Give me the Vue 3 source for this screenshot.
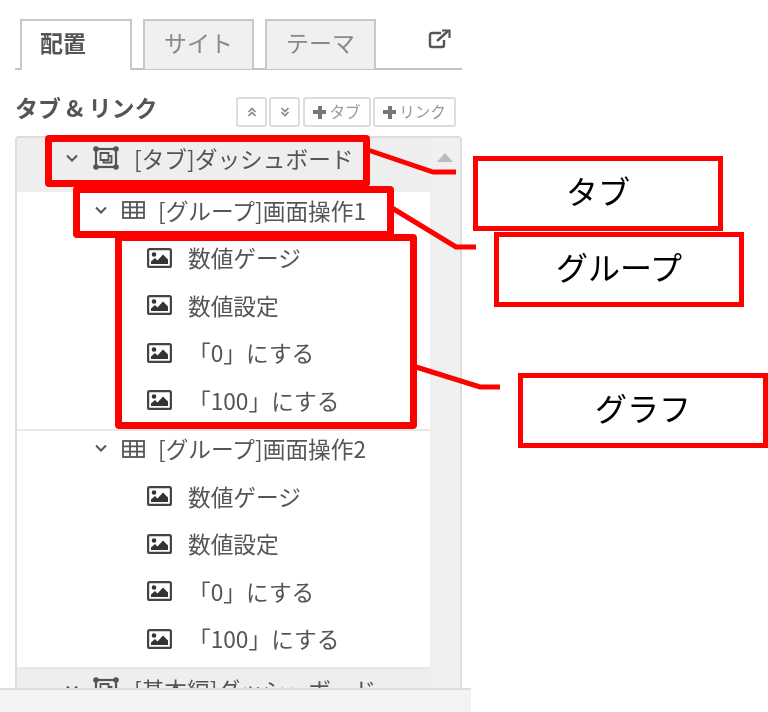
<script setup>
const sections = [
  { title: '[グループ]画面操作1', items: ['数値ゲージ', '数値設定', '「0」にする', '「100」にする'] },
  { title: '[グループ]画面操作2', items: ['数値ゲージ', '数値設定', '「0」にする', '「100」にする'] },
]
</script>

<template>
  <div class="page">
    <main class="panel">
      <nav class="tabs">
        <div class="tab active">配置</div>
        <div class="tab">サイト</div>
        <div class="tab">テーマ</div>
        <svg class="ext" viewBox="0 0 24 20" width="24" height="20" fill="none" stroke="#555" stroke-width="2.4">
          <path d="M13 4H4a2 2 0 0 0-2 2v10a2 2 0 0 0 2 2h10a2 2 0 0 0 2-2v-5" />
          <path d="M9 12 20 2" />
          <path d="M14 1.5h7.5V9" stroke-width="2.2" />
        </svg>
      </nav>
      <header class="head">
        <h2 class="title">タブ &amp; リンク</h2>
        <div class="btns">
          <button class="btn sq">
            <svg viewBox="0 0 10 10" width="10" height="10" fill="none" stroke="#888" stroke-width="1.6"><path d="M1.5 5 5 1.5 8.500 5M1.500 9 5 5.500 8.500 9" /></svg>
          </button>
          <button class="btn sq">
            <svg viewBox="0 0 10 10" width="10" height="10" fill="none" stroke="#888" stroke-width="1.6"><path d="M1.500 1 5 4.500 8.500 1M1.500 5 5 8.500 8.500 5" /></svg>
          </button>
          <button class="btn wide-a"><span class="plus"></span>タブ</button>
          <button class="btn wide-b"><span class="plus"></span>リンク</button>
        </div>
      </header>
      <section class="tree">
        <div class="list">
          <div class="row tab-row">
            <svg class="chev" viewBox="0 0 14 9" width="14" height="9" fill="none" stroke="#555" stroke-width="2"><path d="M2 1.500 7 6.500 12 1.500" /></svg>
            <svg class="ic-tab" viewBox="0 0 26 24" width="26" height="24" fill="none" stroke="#555" stroke-width="2.200">
              <rect x="3" y="3" width="20" height="18" />
              <path d="M7.500 7h8v7h-8zM10.500 14v2.500h8V10h-3" stroke-width="1.800" />
              <g fill="#555" stroke="none"><circle cx="3" cy="3" r="2.800" /><circle cx="23" cy="3" r="2.800" /><circle cx="3" cy="21" r="2.800" /><circle cx="23" cy="21" r="2.800" /></g>
            </svg>
            <span class="label">[タブ]ダッシュボード</span>
          </div>
          <div v-for="s in sections" :key="s.title" class="group">
            <div class="row group-row">
              <svg class="chev" viewBox="0 0 14 9" width="14" height="9" fill="none" stroke="#555" stroke-width="2"><path d="M2 1.500 7 6.500 12 1.500" /></svg>
              <svg class="ic-table" viewBox="0 0 23 18" width="23" height="18" fill="none" stroke="#555" stroke-width="1.800">
                <rect x="1" y="1" width="21" height="16" />
                <path d="M1 6.300H22M1 11.700H22M8 1V17M15 1V17" />
              </svg>
              <span class="label">{{ s.title }}</span>
            </div>
            <div v-for="item in s.items" :key="item" class="row item-row">
              <svg class="ic-img" viewBox="0 0 25 20" width="25" height="20">
                <rect x="1.100" y="1.100" width="22.800" height="17.800" rx="1.500" fill="#fff" stroke="#444" stroke-width="2.200" />
                <circle cx="7" cy="6.500" r="2.300" fill="#333" />
                <path d="M4 16v-2.500l4-3.500 2.500 2.500L16 6.500l5 5V16z" fill="#333" />
              </svg>
              <span class="label">{{ item }}</span>
            </div>
          </div>
          <div class="row tab-row last">
            <svg class="chev" viewBox="0 0 14 9" width="14" height="9" fill="none" stroke="#555" stroke-width="2"><path d="M2 1.500 7 6.500 12 1.500" /></svg>
            <svg class="ic-tab" viewBox="0 0 26 24" width="26" height="24" fill="none" stroke="#555" stroke-width="2.200">
              <rect x="3" y="3" width="20" height="18" />
              <path d="M7.500 7h8v7h-8zM10.500 14v2.500h8V10h-3" stroke-width="1.800" />
              <g fill="#555" stroke="none"><circle cx="3" cy="3" r="2.800" /><circle cx="23" cy="3" r="2.800" /><circle cx="3" cy="21" r="2.800" /><circle cx="23" cy="21" r="2.800" /></g>
            </svg>
            <span class="label">[基本編]ダッシュボード</span>
          </div>
        </div>
        <aside class="scroll"><span class="arrow"></span></aside>
      </section>
    </main>
    <footer class="foot"></footer>

    <!-- annotations laid over the screenshot -->
    <div class="mark m-tab"></div>
    <div class="mark m-group"></div>
    <div class="mark m-graph"></div>
    <svg class="lines" viewBox="0 0 768 712" width="768" height="712" fill="none" stroke="#f00" stroke-width="5">
      <path d="M368 150 433 172H456" />
      <path d="M392 208 456 247H476" />
      <path d="M416 367 480 387H500" />
    </svg>
    <div class="callout c-tab">タブ</div>
    <div class="callout c-group">グループ</div>
    <div class="callout c-graph">グラフ</div>
  </div>
</template>

<style>
html, body { margin: 0; background: #fff; }
</style>

<style scoped>
.page {
  position: relative;
  width: 768px;
  height: 712px;
  overflow: hidden;
  display: flex;
  flex-direction: column;
  background: #fff;
  font-family: "Noto Sans CJK JP", "Liberation Sans", sans-serif;
  color: #555;
  filter: blur(0.45px);
}
.panel {
  flex: 1;
  min-height: 0;
  width: 447px;
  margin-left: 15px;
  padding-top: 19px;
  box-sizing: border-box;
  display: flex;
  flex-direction: column;
  overflow: hidden;
}
.tabs {
  display: flex;
  gap: 11px;
  height: 51px;
  padding-left: 5px;
  box-sizing: border-box;
  border-bottom: 2px solid #c4c4c4;
  position: relative;
}
.tab {
  width: 111px;
  height: 50px;
  box-sizing: border-box;
  border: 2px solid #c8c8c8;
  border-bottom: 0;
  background: #f0f0f0;
  color: #888;
  font-size: 23px;
  line-height: 42px;
  text-align: center;
}
.tab.active {
  width: 112px;
  height: 51px;
  padding-right: 26px;
  background: #fff;
  color: #555;
  font-weight: 700;
}
.ext { position: absolute; left: 413px; top: 10px; }
.head {
  display: flex;
  justify-content: space-between;
  padding: 27px 6px 0 0;
  height: 66px;
  box-sizing: border-box;
}
.title {
  margin: 0;
  font-size: 23px;
  font-weight: 700;
  line-height: 21px;
  color: #555;
  white-space: nowrap;
}
.btns { display: flex; gap: 2px; height: 30px; }
.btn {
  padding: 0;
  box-sizing: border-box;
  height: 30px;
  border: 2px solid #ddd;
  border-radius: 3px;
  background: #fff;
  color: #999;
  font: 15.500px/1 "Noto Sans CJK JP", "Liberation Sans", sans-serif;
  display: flex;
  align-items: center;
  justify-content: center;
}
.sq { width: 31px; }
.wide-a { width: 68px; margin-left: 1px; }
.wide-b { width: 83px; }
.plus {
  width: 13px;
  height: 13px;
  margin-right: 3px;
  background:
    linear-gradient(#777, #777) center / 13px 4px no-repeat,
    linear-gradient(#777, #777) center / 4px 13px no-repeat;
}
.tree {
  flex: 1;
  min-height: 0;
  display: flex;
  border: 2px solid #ddd;
  border-bottom: 0;
  border-radius: 4px 4px 0 0;
  overflow: hidden;
}
.list { width: 413px; flex: none; }
.scroll {
  flex: 1;
  background: #f0f0f0;
  display: flex;
  justify-content: center;
  padding-top: 15px;
}
.arrow {
  width: 0;
  height: 0;
  border: 8px solid transparent;
  border-top: 0;
  border-bottom: 9px solid #bbb;
}
.row {
  display: flex;
  align-items: center;
  box-sizing: border-box;
  white-space: nowrap;
  font-size: 22.700px;
  color: #555;
}
.label { line-height: 1; padding-top: 2px; }
.tab-row {
  height: 54px;
  padding: 0 0 14px 48px;
  background: #eee;
}
.tab-row.last { padding-bottom: 0; height: 40px; }
.tab-row .ic-tab { margin: 0 15px 0 14px; }
.group { border-bottom: 2px solid #e8e8e8; padding-bottom: 4.500px; }
.group-row {
  height: 42px;
  padding: 0 0 6px 77px;
}
.group-row .ic-table { margin: 0 13px 0 14px; }
.item-row {
  height: 47.500px;
  padding-left: 130px;
}
.item-row .ic-img { margin-right: 16px; }
.foot {
  position: absolute;
  left: 0;
  bottom: 0;
  width: 471px;
  height: 24px;
  box-sizing: border-box;
  background: #f3f3f3;
  border-top: 2px solid #ddd;
}
.mark {
  position: absolute;
  box-sizing: border-box;
  border: 7px solid #f00;
  border-radius: 4px;
}
.m-tab { left: 45px; top: 135px; width: 325px; height: 52px; }
.m-group { left: 73px; top: 186px; width: 321px; height: 52px; }
.m-graph { left: 115px; top: 234px; width: 302px; height: 195px; }
.lines { position: absolute; left: 0; top: 0; }
.callout {
  position: absolute;
  box-sizing: border-box;
  width: 250px;
  height: 75px;
  border: 5px solid #f00;
  background: #fff;
  color: #000;
  font-size: 32px;
  line-height: 58px;
  text-align: center;
}
.c-tab { left: 473px; top: 156px; }
.c-group { left: 494px; top: 232px; }
.c-graph { left: 518px; top: 373px; }
</style>
